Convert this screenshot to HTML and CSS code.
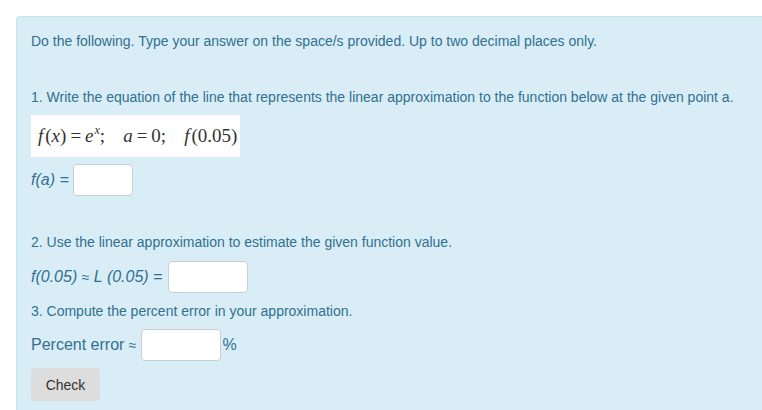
FILE: index.html
```html
<!DOCTYPE html>
<html>
<head>
<meta charset="utf-8">
<link rel="stylesheet" href="styles.css">
</head>
<body>
<div class="page">
  <div class="panel">
    <p class="line intro">Do the following. Type your answer on the space/s provided. Up to two decimal places only.</p>
    <p class="line q1">1. Write the equation of the line that represents the linear approximation to the function below at the given point a.</p>
    <div class="math"><span class="mi f">f</span>(<span class="mi">x</span>)<span class="eq">=</span><span class="mi">e</span><sup class="mi">x</sup>;<span class="sp"></span><span class="mi">a</span><span class="eq">=</span>0;<span class="sp"></span><span class="mi f">f</span>(0.05)</div>
    <div class="row"><span class="label it">f(a) =</span><span class="input w60"></span></div>
    <p class="line q2">2. Use the linear approximation to estimate the given function value.</p>
    <div class="row"><span class="label it wide">f(0.05) <span class="approx">≈</span> L (0.05) =</span><span class="input w80"></span></div>
    <p class="line q3">3. Compute the percent error in your approximation.</p>
    <div class="row"><span class="label">Percent error <span class="approx">≈</span></span><span class="input w80"></span><span class="pct">%</span></div>
    <button class="btn">Check</button>
  </div>
</div>
</body>
</html>
```
FILE: styles.css
```css
html, body { margin: 0; padding: 0; background: #fff; overflow: hidden; }
.page { padding: 16px 0 0 16px; height: 394px; }
.panel {
  box-sizing: border-box;
  background: #d9edf7;
  border: 1px solid #bce8f1;
  border-right: none;
  border-bottom: none;
  border-radius: 4px 0 0 0;
  padding: 14px 0 0 14px;
  height: 394px;
  color: #31708f;
  font-family: "Liberation Sans", Arial, sans-serif;
  font-size: 14px;
}
.line { margin: 0; line-height: 20px; }
.q1 { margin-top: 36px; }
.math {
  margin-top: 8px;
  display: inline-block;
  background: #fff;
  height: 42px;
  line-height: 42px;
  padding: 0 3px 0 7px;
  color: #333;
  font-family: "Liberation Serif", "Times New Roman", serif;
  font-size: 19px;
}
.mi { font-style: italic; }
.f { margin-right: 2px; }
.eq { margin: 0 4px; }
.math sup { font-size: 12px; vertical-align: 0; position: relative; top: -8px; margin-left: 1px; }
.sp { display: inline-block; width: 18px; }
.row { display: flex; align-items: center; margin-top: 7px; height: 32px; }
.label { font-size: 16px; margin-right: 4px; }
.label.wide { margin-right: 6px; }
.it { font-style: italic; }
.approx { font-size: 14px; font-style: normal; }
.input {
  display: block;
  box-sizing: border-box;
  height: 32px;
  background: #fff;
  border: 1px solid #c4d0d6;
  border-radius: 4px;
}
.w60 { width: 60px; }
.w80 { width: 80px; }
.pct { font-size: 16px; margin-left: 2px; }
.q2 { margin-top: 36px; }
.q2 + .row { margin-top: 9px; }
.q3 { margin-top: 8px; }
.q3 + .row { margin-top: 8px; }
.btn {
  display: block;
  margin-top: 7px;
  width: 69px;
  height: 33px;
  background: #ddd;
  border: none;
  border-radius: 3px;
  color: #333;
  font-family: "Liberation Sans", Arial, sans-serif;
  font-size: 14px;
  padding: 0;
}
```
